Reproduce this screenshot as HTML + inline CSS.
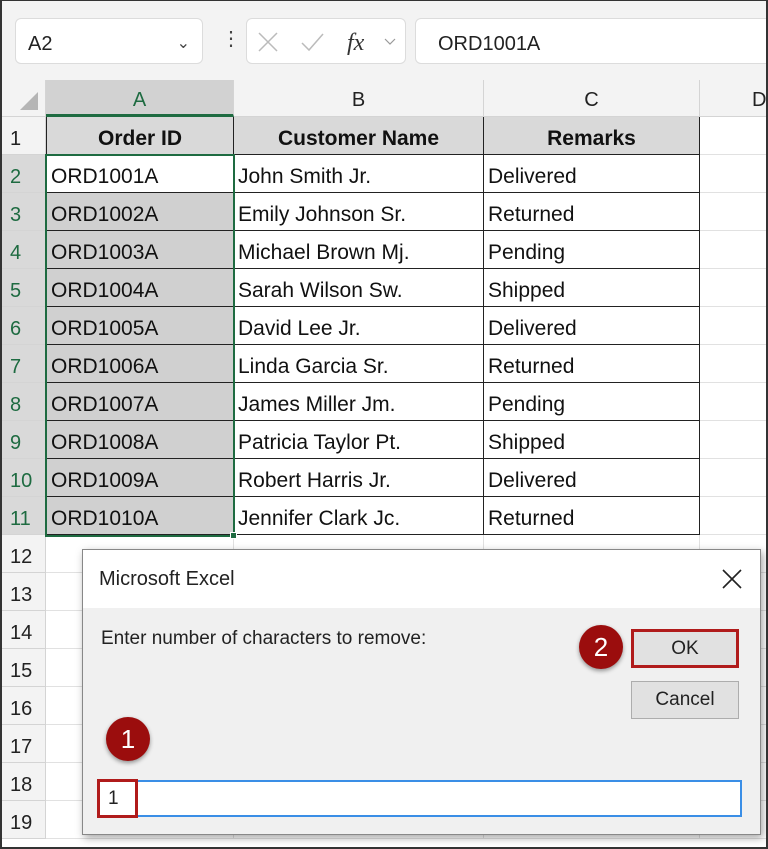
<!DOCTYPE html>
<html><head><style>
*{margin:0;padding:0;box-sizing:border-box}
body{width:768px;height:849px;overflow:hidden;background:#fff;font-family:"Liberation Sans",sans-serif;position:relative}
.a{position:absolute}
.frame{left:0;top:0;width:768px;height:849px;border:2px solid #333;border-top-width:1px;z-index:50;pointer-events:none}
.bar{left:0;top:0;width:768px;height:80px;background:#f3f3f3}
.box{background:#fff;border:1px solid #dcdcdc;border-radius:6px}
.ch{top:80px;height:37px;background:#f3f3f3;border-right:1px solid #d4d4d4;border-bottom:1px solid #d4d4d4;text-align:center;font-size:20px;line-height:40px;color:#222}
.rh{left:0;width:46px;height:38px;background:#f3f3f3;border-bottom:1px solid #d4d4d4;border-right:1px solid #d4d4d4;font-size:20px;line-height:44px;padding-left:10px;color:#222}
.rh.s{background:#d9d9d9;color:#1e6b41}
.c{height:38px;border-right:1.5px solid #222;border-bottom:1.5px solid #222;font-size:21px;line-height:44px;padding-left:4px;color:#111;white-space:nowrap;overflow:hidden}
.g{border-right:1px solid #e1e1e1;border-bottom:1px solid #e1e1e1;height:38px}
.circ{width:44px;height:44px;border-radius:50%;background:#9b0d0d;color:#fff;font-size:26px;text-align:center;line-height:44px;box-shadow:0 2px 4px rgba(0,0,0,.4)}
</style></head><body>
<div class="a bar"></div>
<div class="a box" style="left:15px;top:18px;width:188px;height:46px;font-size:20px;line-height:50px;padding-left:12px;color:#222">A2<span class="a" style="right:12px;top:0;font-size:16px;color:#444">&#8964;</span></div>
<div class="a" style="left:221px;top:28px;width:4px;height:26px;font-size:20px;line-height:22px;color:#444">&#8942;</div>
<div class="a box" style="left:246px;top:18px;width:160px;height:46px">
<svg width="160" height="46" style="position:absolute;left:0;top:0"><path d="M12 14l18 18M30 14l-18 18" stroke="#bbb" stroke-width="1.5"/><path d="M55 24l7 7 14-16" stroke="#bbb" stroke-width="1.5" fill="none"/><text x="100" y="31" font-family="Liberation Serif" font-style="italic" font-size="24" fill="#333">fx</text><path d="M138 20l5 5 5-5" stroke="#999" stroke-width="1.2" fill="none"/></svg></div>
<div class="a box" style="left:415px;top:18px;width:360px;height:46px;font-size:20px;line-height:50px;padding-left:22px;color:#222">ORD1001A</div>

<div class="a ch" style="left:0;width:46px"><svg width="46" height="37"><path d="M38 30L38 12 20 30Z" fill="#b5b5b5"/></svg></div>
<div class="a ch" style="left:46px;width:188px;background:#d2d2d2;color:#1e6b41;border-bottom:3px solid #1e6b41">A</div>
<div class="a ch" style="left:234px;width:250px">B</div>
<div class="a ch" style="left:484px;width:216px">C</div>
<div class="a ch" style="left:700px;width:80px;text-align:left;padding-left:52px">D</div>

<div id="g"></div>
<script>
var rows=[["Order ID","Customer Name","Remarks"],["ORD1001A","John Smith Jr.","Delivered"],["ORD1002A","Emily Johnson Sr.","Returned"],["ORD1003A","Michael Brown Mj.","Pending"],["ORD1004A","Sarah Wilson Sw.","Shipped"],["ORD1005A","David Lee Jr.","Delivered"],["ORD1006A","Linda Garcia Sr.","Returned"],["ORD1007A","James Miller Jm.","Pending"],["ORD1008A","Patricia Taylor Pt.","Shipped"],["ORD1009A","Robert Harris Jr.","Delivered"],["ORD1010A","Jennifer Clark Jc.","Returned"]];
var h="";
for(var i=0;i<19;i++){var y=117+i*38;
h+='<div class="a rh'+(i>=1&&i<=10?' s':'')+'" style="top:'+y+'px">'+(i+1)+'</div>';
if(i<11){var r=rows[i];
var st=i==0?'background:#d9d9d9;font-weight:bold;text-align:center;padding-left:0;':'';
h+='<div class="a c" style="left:46px;top:'+y+'px;width:188px;border-left:1.5px solid #222;'+(i>=2?'background:#d0d0d0;':'')+st+'">'+r[0]+'</div>';
h+='<div class="a c" style="left:234px;top:'+y+'px;width:250px;'+st+'">'+r[1]+'</div>';
h+='<div class="a c" style="left:484px;top:'+y+'px;width:216px;'+st+'">'+r[2]+'</div>';
h+='<div class="a g" style="left:700px;top:'+y+'px;width:80px"></div>';
}else{h+='<div class="a g" style="left:46px;top:'+y+'px;width:188px"></div><div class="a g" style="left:234px;top:'+y+'px;width:250px"></div><div class="a g" style="left:484px;top:'+y+'px;width:216px"></div><div class="a g" style="left:700px;top:'+y+'px;width:80px"></div>';}
}
document.getElementById('g').innerHTML=h;
</script>
<div class="a" style="left:45px;top:154px;width:190px;height:383px;border:2.5px solid #1e6b41;z-index:5"></div>
<div class="a" style="left:230px;top:532px;width:7px;height:7px;background:#1e6b41;border:1px solid #fff;z-index:6"></div>

<div class="a" style="left:82px;top:549px;width:679px;height:286px;background:#f0f0f0;border:1px solid #888;box-shadow:2px 3px 8px rgba(0,0,0,.35);z-index:10">
<div class="a" style="left:0;top:0;width:677px;height:58px;background:#fff;font-size:20px;line-height:58px;padding-left:16px;color:#222">Microsoft Excel
<svg class="a" style="right:18px;top:19px" width="20" height="20"><path d="M1 1l18 18M19 1L1 19" stroke="#222" stroke-width="1.6"/></svg></div>
<div class="a" style="left:18px;top:78px;font-size:19px;color:#222">Enter number of characters to remove:</div>
<div class="a" style="left:548px;top:79px;width:108px;height:39px;background:#e1e1e1;border:3px solid #b01b1b;font-size:19px;text-align:center;line-height:33px;color:#222">OK</div>
<div class="a" style="left:548px;top:131px;width:108px;height:38px;background:#e1e1e1;border:1px solid #adadad;font-size:19px;text-align:center;line-height:36px;color:#222">Cancel</div>
<div class="a" style="left:15px;top:230px;width:644px;height:37px;background:#fff;border:2px solid #3a8ee6"></div>
<div class="a" style="left:14px;top:229px;width:41px;height:39px;border:3px solid #b01b1b;font-size:19px;line-height:33px;padding-left:8px;color:#222">1</div>
<div class="a circ" style="left:23px;top:167px">1</div>
<div class="a circ" style="left:496px;top:75px">2</div>
</div>
<div class="a frame"></div>
</body></html>
